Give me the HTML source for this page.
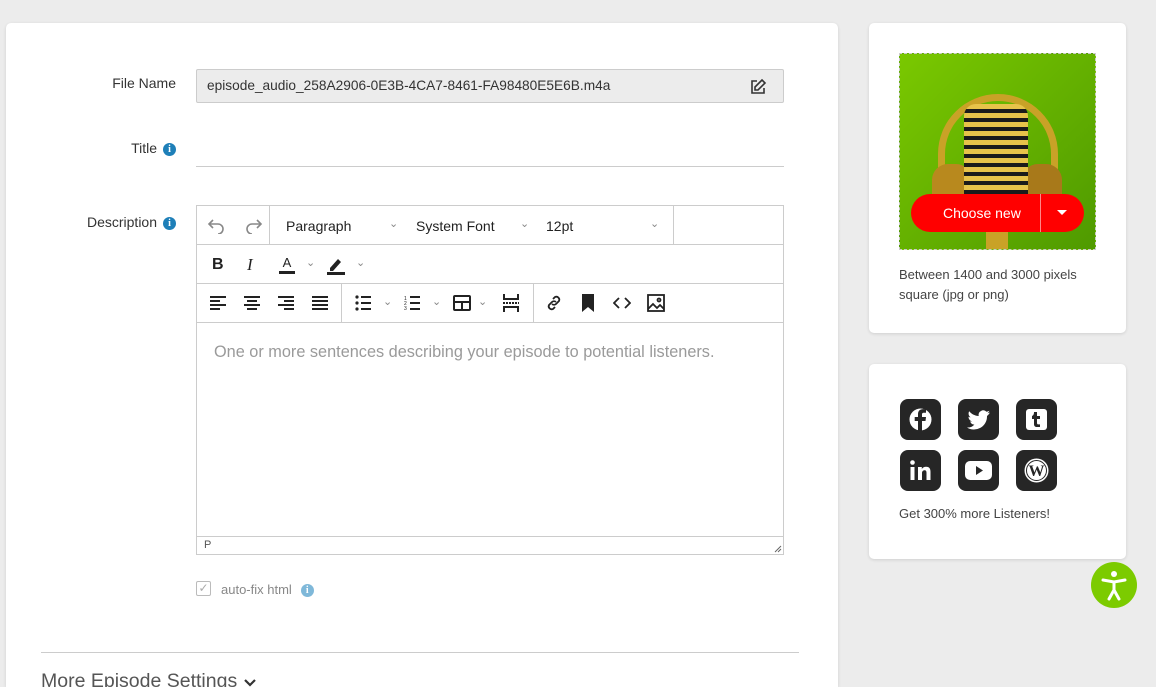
<!DOCTYPE html>
<html><head><meta charset="utf-8"><style>
*{box-sizing:border-box;margin:0;padding:0}
html,body{width:1156px;height:687px;overflow:hidden}
body{background:#ececec;font-family:"Liberation Sans",sans-serif;position:relative;color:#222}
.a{position:absolute}
.card{position:absolute;background:#fff;border-radius:5px;box-shadow:0 1px 3px rgba(0,0,0,.12)}
.lbl{font-size:14px;color:#333;text-align:right}
.info{display:inline-block;width:13px;height:13px;border-radius:50%;background:#1e7fb8;color:#fff;font-size:10px;font-weight:bold;text-align:center;line-height:13px;font-family:"Liberation Serif",serif;vertical-align:1px;margin-left:6px}
.tb{position:absolute;left:0;right:0;border-bottom:1px solid #ccc;height:39px}
.ic{position:absolute;top:0}
.sq{position:absolute;width:41px;height:41px;border-radius:8px;background:#262626}
.dd{font-size:14px;color:#222;position:absolute;top:12px}
.chev{position:absolute;top:11px;color:#888;font-size:11px}
</style></head><body>
<div class="card" style="left:6px;top:23px;width:832px;height:664px;border-radius:5px 5px 0 0"></div>
<div class="a lbl" style="left:60px;top:75px;width:116px">File Name</div>
<div class="a" style="left:196px;top:69px;width:588px;height:34px;background:#ececec;border:1px solid #ccc;border-radius:2px;font-size:13.7px;color:#333;padding:8px 10px">episode_audio_258A2906-0E3B-4CA7-8461-FA98480E5E6B.m4a
<svg class="a" style="right:16px;top:8px" width="18" height="18" viewBox="0 0 18 18" fill="none" stroke="#333" stroke-width="1.6"><path d="M8 3H3v12h12v-5"/><path d="M13 2l3 3-7 7H6V9z"/></svg></div>
<div class="a lbl" style="left:60px;top:140px;width:116px">Title<span class="info">i</span></div>
<div class="a" style="left:196px;top:166px;width:588px;height:1px;background:#ccc"></div>
<div class="a lbl" style="left:40px;top:214px;width:136px">Description<span class="info">i</span></div>
<div class="a" style="left:196px;top:205px;width:588px;height:350px;border:1px solid #ccc">
 <div class="tb" style="top:0">
  <svg class="ic" style="left:10px;top:10px" width="20" height="18" viewBox="0 0 20 18" fill="none" stroke="#888" stroke-width="1.6"><path d="M6 4L2 8l4 4"/><path d="M2 8h9a5 5 0 010 10"/></svg>
  <svg class="ic" style="left:46px;top:10px" width="20" height="18" viewBox="0 0 20 18" fill="none" stroke="#888" stroke-width="1.6"><path d="M14 4l4 4-4 4"/><path d="M18 8H9a5 5 0 000 10"/></svg>
  <div class="a" style="left:72px;top:0;width:1px;height:39px;background:#ccc"></div>
  <div class="dd" style="left:89px">Paragraph</div><div class="chev" style="left:192px">&#8964;</div>
  <div class="dd" style="left:219px">System Font</div><div class="chev" style="left:323px">&#8964;</div>
  <div class="dd" style="left:349px">12pt</div><div class="chev" style="left:453px">&#8964;</div>
  <div class="a" style="left:476px;top:0;width:1px;height:39px;background:#ccc"></div>
 </div>
 <div class="tb" style="top:39px">
  <div class="a" style="left:15px;top:11px;font-weight:bold;font-size:16px">B</div>
  <div class="a" style="left:50px;top:10px;font-style:italic;font-size:17px;font-family:'Liberation Serif',serif">I</div>
  <div class="a" style="left:82px;top:10px;font-size:13px;border-bottom:3px solid #222;width:16px;text-align:center;height:19px">A</div>
  <div class="chev" style="left:109px">&#8964;</div>
  <svg class="a" style="left:130px;top:10px" width="18" height="20" viewBox="0 0 18 20"><path d="M3 13l8-9 3 3-8 9H3z" fill="#222"/><rect x="0" y="17" width="18" height="3" fill="#222"/></svg>
  <div class="chev" style="left:159px">&#8964;</div>
 </div>
 <div class="tb" style="top:78px">
  <svg class="a" style="left:13px;top:12px" width="120" height="14" viewBox="0 0 120 14" fill="#222"><g><rect x="0" y="0" width="16" height="2"/><rect x="0" y="4" width="10" height="2"/><rect x="0" y="8" width="16" height="2"/><rect x="0" y="12" width="10" height="2"/></g><g transform="translate(34)"><rect x="0" y="0" width="16" height="2"/><rect x="3" y="4" width="10" height="2"/><rect x="0" y="8" width="16" height="2"/><rect x="3" y="12" width="10" height="2"/></g><g transform="translate(68)"><rect x="0" y="0" width="16" height="2"/><rect x="6" y="4" width="10" height="2"/><rect x="0" y="8" width="16" height="2"/><rect x="6" y="12" width="10" height="2"/></g><g transform="translate(102)"><rect x="0" y="0" width="16" height="2"/><rect x="0" y="4" width="16" height="2"/><rect x="0" y="8" width="16" height="2"/><rect x="0" y="12" width="16" height="2"/></g></svg>
  <div class="a" style="left:144px;top:0;width:1px;height:39px;background:#ccc"></div>
  <svg class="a" style="left:158px;top:11px" width="16" height="16" viewBox="0 0 16 16" fill="#222"><circle cx="2" cy="2" r="1.6"/><circle cx="2" cy="8" r="1.6"/><circle cx="2" cy="14" r="1.6"/><rect x="6" y="1" width="10" height="2"/><rect x="6" y="7" width="10" height="2"/><rect x="6" y="13" width="10" height="2"/></svg>
  <div class="chev" style="left:186px">&#8964;</div>
  <svg class="a" style="left:207px;top:11px" width="16" height="16" viewBox="0 0 16 16" fill="#222"><text x="0" y="5" font-size="5">1</text><text x="0" y="10" font-size="5">2</text><text x="0" y="15" font-size="5">3</text><rect x="6" y="1" width="10" height="2"/><rect x="6" y="7" width="10" height="2"/><rect x="6" y="13" width="10" height="2"/></svg>
  <div class="chev" style="left:235px">&#8964;</div>
  <svg class="a" style="left:256px;top:11px" width="18" height="16" viewBox="0 0 18 16" fill="none" stroke="#222" stroke-width="2"><rect x="1" y="1" width="16" height="14" rx="1"/><path d="M1 7h16M9 7v8"/></svg>
  <div class="chev" style="left:281px">&#8964;</div>
  <svg class="a" style="left:306px;top:10px" width="16" height="18" viewBox="0 0 16 18" fill="none" stroke="#222" stroke-width="2"><path d="M1 0v5h14V0M1 18v-5h14v5"/><path d="M0 9h16" stroke-dasharray="2 1"/></svg>
  <div class="a" style="left:336px;top:0;width:1px;height:39px;background:#ccc"></div>
  <svg class="a" style="left:348px;top:10px" width="18" height="18" viewBox="0 0 18 18" fill="none" stroke="#222" stroke-width="1.8"><path d="M8 5l2-2a3 3 0 014 4l-3 3a3 3 0 01-4 0"/><path d="M10 13l-2 2a3 3 0 01-4-4l3-3a3 3 0 014 0"/></svg>
  <svg class="a" style="left:385px;top:10px" width="12" height="18" viewBox="0 0 12 18"><path d="M0 0h12v18l-6-5-6 5z" fill="#222"/></svg>
  <svg class="a" style="left:416px;top:13px" width="18" height="12" viewBox="0 0 18 12" fill="none" stroke="#222" stroke-width="1.8"><path d="M6 1L1 6l5 5M12 1l5 5-5 5"/></svg>
  <svg class="a" style="left:450px;top:10px" width="18" height="18" viewBox="0 0 18 18" fill="none" stroke="#222" stroke-width="1.8"><rect x="1" y="1" width="16" height="16"/><path d="M1 15l5-5 4 4 3-3 4 4"/><circle cx="12" cy="6" r="1.5"/></svg>
 </div>
 <div class="a" style="left:17px;top:137px;font-size:16.3px;color:#9a9a9a">One or more sentences describing your episode to potential listeners.</div>
 <div class="a" style="left:0;right:0;top:330px;border-top:1px solid #ccc;height:19px;font-size:11px;color:#555;padding:2px 7px">P</div>
 <svg class="a" style="right:1px;bottom:1px" width="8" height="8" viewBox="0 0 8 8" stroke="#666"><path d="M1 7L7 1M4 7l3-3"/></svg>
</div>
<div class="a" style="left:196px;top:581px;width:15px;height:15px;border:1px solid #bbb;border-radius:2px;color:#aaa;font-size:12px;line-height:13px;text-align:center">&#10003;</div>
<div class="a" style="left:221px;top:582px;font-size:13px;color:#888">auto-fix html<span class="info" style="background:#7fb8d9;margin-left:9px">i</span></div>
<div class="a" style="left:41px;top:652px;width:758px;height:1px;background:#ccc"></div>
<div class="a" style="left:41px;top:670px;font-size:19.5px;color:#555">More Episode Settings <svg width="14" height="10" viewBox="0 0 14 10" fill="none" stroke="#333" stroke-width="2.2" style="vertical-align:-1px"><path d="M2 2l5 5 5-5"/></svg></div>

<div class="card" style="left:869px;top:23px;width:257px;height:310px"></div>
<div class="a" style="left:899px;top:53px;width:197px;height:197px;border:1px dashed #ccc;background:linear-gradient(135deg,#7ac800,#4f9a00);overflow:hidden">
 <div class="a" style="left:38px;top:40px;width:120px;height:110px;border:7px solid #c9a227;border-bottom:none;border-radius:60px 60px 0 0"></div>
 <div class="a" style="left:32px;top:110px;width:40px;height:55px;border-radius:16px;background:#b8891e"></div>
 <div class="a" style="left:122px;top:110px;width:40px;height:55px;border-radius:16px;background:#a8791a"></div>
 <div class="a" style="left:64px;top:50px;width:64px;height:105px;border-radius:12px;background:repeating-linear-gradient(180deg,#e7c34a 0 5px,#1b1b1b 5px 9px)"></div>
 <div class="a" style="left:86px;top:150px;width:22px;height:47px;background:#c9a227"></div>
</div>
<div class="a" style="left:911px;top:194px;width:173px;height:38px;border-radius:19px;background:#f00;color:#fff;font-size:14px">
 <div class="a" style="left:32px;top:11px">Choose new</div>
 <div class="a" style="left:129px;top:0;width:1px;height:38px;background:#f88"></div>
 <div class="a" style="left:146px;top:16px;width:0;height:0;border-left:5px solid transparent;border-right:5px solid transparent;border-top:5px solid #fff"></div>
</div>
<div class="a" style="left:899px;top:265px;font-size:13px;line-height:20px;color:#444">Between 1400 and 3000 pixels<br>square (jpg or png)</div>

<div class="card" style="left:869px;top:364px;width:257px;height:195px"></div>
<div class="sq" style="left:900px;top:399px"><svg width="41" height="41" viewBox="0 0 41 41"><circle cx="20.5" cy="20.5" r="11" fill="#fff"/><path d="M22 33V22h3.5l.5-4h-4v-2.5c0-1 .4-1.8 2-1.8h2v-3.4c-.4 0-1.6-.2-3-.2-3 0-5 1.8-5 5V18h-3.3v4H18v11z" fill="#262626"/></svg></div>
<div class="sq" style="left:958px;top:399px"><svg width="41" height="41" viewBox="0 0 41 41"><path d="M32 13.5c-.8.4-1.7.6-2.6.7.9-.6 1.6-1.4 2-2.5-.9.5-1.9.9-2.9 1.1a4.6 4.6 0 00-7.8 4.2c-3.8-.2-7.2-2-9.5-4.8-1.2 2.1-.6 4.8 1.4 6.1-.7 0-1.4-.2-2.1-.6 0 2.3 1.6 4.2 3.7 4.6-.7.2-1.4.2-2.1.1.6 1.9 2.3 3.2 4.3 3.2A9.2 9.2 0 019 28.5 13 13 0 0029 17.5v-.6c.9-.6 1.6-1.4 2.2-2.3z" fill="#fff"/></svg></div>
<div class="sq" style="left:1016px;top:399px"><svg width="41" height="41" viewBox="0 0 41 41"><rect x="10" y="10" width="21" height="21" rx="3" fill="#fff"/><path d="M18 13h3v4h3v3h-3v4c0 1 .6 1.4 1.5 1.4H24V28h-3c-2 0-3-1-3-3v-5h-2v-3c1.2-.4 2-1.6 2-4z" fill="#262626"/></svg></div>
<div class="sq" style="left:900px;top:450px"><svg width="41" height="41" viewBox="0 0 41 41" fill="#fff"><circle cx="12.5" cy="12.5" r="2.3"/><rect x="10.5" y="17" width="4" height="13"/><path d="M18 17h3.8v2c.8-1.4 2.3-2.3 4.3-2.3 3.5 0 4.4 2.2 4.4 5.3V30h-4v-7c0-1.6-.4-2.7-1.9-2.7-1.7 0-2.6 1.2-2.6 2.9V30h-4z"/></svg></div>
<div class="sq" style="left:958px;top:450px"><svg width="41" height="41" viewBox="0 0 41 41"><rect x="7" y="11" width="27" height="19" rx="5" fill="#fff"/><path d="M18 16v9l7-4.5z" fill="#262626"/></svg></div>
<div class="sq" style="left:1016px;top:450px"><svg width="41" height="41" viewBox="0 0 41 41"><circle cx="20.5" cy="20.5" r="12" fill="#fff"/><circle cx="20.5" cy="20.5" r="10" fill="none" stroke="#262626" stroke-width="1"/><text x="20.5" y="26" text-anchor="middle" font-family="Liberation Serif" font-weight="bold" font-size="16" fill="#262626">W</text></svg></div>
<div class="a" style="left:899px;top:506px;font-size:13px;color:#444">Get 300% more Listeners!</div>

<div class="a" style="left:1091px;top:562px;width:46px;height:46px;border-radius:50%;background:#7ccb00">
 <svg width="46" height="46" viewBox="0 0 46 46" fill="none" stroke="#fff" stroke-width="3" stroke-linecap="round"><circle cx="23" cy="12" r="3" fill="#fff" stroke="none"/><path d="M12 18l11 2 11-2M23 20v8l-5 9M23 28l5 9"/></svg>
</div>
</body></html>
